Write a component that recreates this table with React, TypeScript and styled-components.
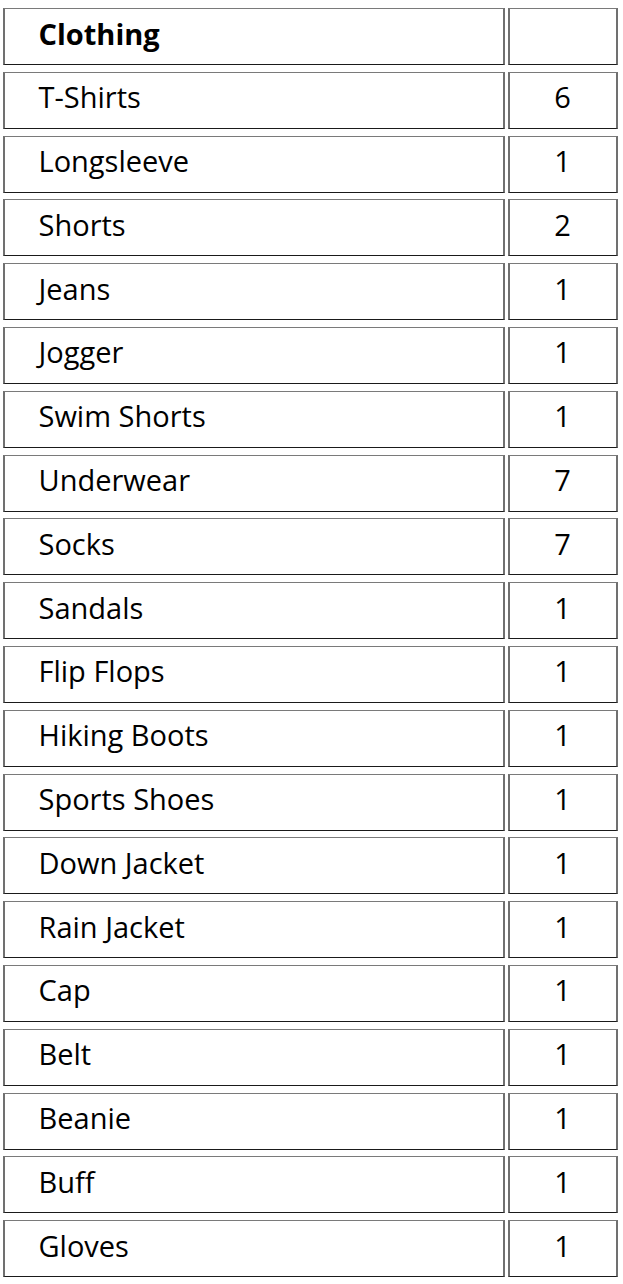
import React from "react";
import styled, { createGlobalStyle } from "styled-components";

const GlobalStyle = createGlobalStyle`
  html, body {
    margin: 0;
    padding: 0;
    background: #ffffff;
  }
  body {
    font-family: "Open Sans", "Noto Sans", Arial, sans-serif;
    color: #000000;
  }
`;

const Table = styled.div`
  display: grid;
  grid-template-columns: 502px 110px;
  grid-auto-rows: 57px;
  column-gap: 3px;
  row-gap: 6.8px;
  padding: 8px 0 0 2.5px;
`;

const Cell = styled.div<{ $num?: boolean; $head?: boolean }>`
  box-sizing: border-box;
  display: flex;
  align-items: center;
  justify-content: ${(p) => (p.$num ? "center" : "flex-start")};
  padding-left: ${(p) => (p.$num ? "0" : "34px")};
  padding-bottom: 7px;
  border-top: 1px solid #7a7a7a;
  border-left: 2px solid #707070;
  border-right: 2px solid #707070;
  border-bottom: 1.5px solid #1a1a1a;
  font-size: 29px;
  font-weight: ${(p) => (p.$head ? 700 : 400)};
  line-height: 1;
`;

const items: [string, number][] = [
  ["T-Shirts", 6],
  ["Longsleeve", 1],
  ["Shorts", 2],
  ["Jeans", 1],
  ["Jogger", 1],
  ["Swim Shorts", 1],
  ["Underwear", 7],
  ["Socks", 7],
  ["Sandals", 1],
  ["Flip Flops", 1],
  ["Hiking Boots", 1],
  ["Sports Shoes", 1],
  ["Down Jacket", 1],
  ["Rain Jacket", 1],
  ["Cap", 1],
  ["Belt", 1],
  ["Beanie", 1],
  ["Buff", 1],
  ["Gloves", 1],
];

function App() {
  return (
    <>
      <GlobalStyle />
      <Table>
        <Cell $head>Clothing</Cell>
        <Cell $num></Cell>
        {items.map(([name, qty]) => (
          <React.Fragment key={name}>
            <Cell>{name}</Cell>
            <Cell $num>{qty}</Cell>
          </React.Fragment>
        ))}
      </Table>
    </>
  );
}

export default App;
